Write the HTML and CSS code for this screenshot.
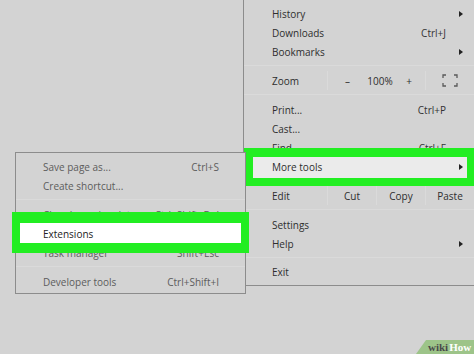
FILE: index.html
```html
<!DOCTYPE html>
<html>
<head>
<meta charset="utf-8">
<link rel="stylesheet" href="styles.css">
</head>
<body>
<div class="desktop">
  <div class="menu main">
    <div class="item"><span class="label">History</span><span class="arrow"></span></div>
    <div class="item"><span class="label">Downloads</span><span class="key">Ctrl+J</span></div>
    <div class="item"><span class="label">Bookmarks</span><span class="arrow"></span></div>
    <div class="sep"></div>
    <div class="item tools">
      <span class="label">Zoom</span>
      <div class="zoomgroup">
        <span class="zminus">–</span><span class="zval">100%</span><span class="zplus">+</span>
      </div>
      <div class="cell">
        <svg width="16" height="13" viewBox="0 0 16 13" class="fs">
          <path d="M1 4V1h3M12 1h3v3M15 9v3h-3M4 12H1V9" fill="none" stroke="#5a5a5a" stroke-width="1.3"/>
        </svg>
      </div>
    </div>
    <div class="sep"></div>
    <div class="item"><span class="label">Print...</span><span class="key">Ctrl+P</span></div>
    <div class="item"><span class="label">Cast...</span></div>
    <div class="item"><span class="label">Find...</span><span class="key">Ctrl+F</span></div>
    <div class="item hl-more"><span class="label">More tools</span><span class="arrow"></span></div>
    <div class="sep"></div>
    <div class="item tools">
      <span class="label">Edit</span>
      <div class="cell">Cut</div>
      <div class="cell">Copy</div>
      <div class="cell">Paste</div>
    </div>
    <div class="sep"></div>
    <div class="item"><span class="label">Settings</span></div>
    <div class="item"><span class="label">Help</span><span class="arrow"></span></div>
    <div class="sep last"></div>
    <div class="item"><span class="label">Exit</span></div>
  </div>

  <div class="menu sub">
    <div class="sitem"><span class="label">Save page as...</span><span class="key">Ctrl+S</span></div>
    <div class="sitem"><span class="label">Create shortcut...</span></div>
    <div class="sep"></div>
    <div class="sitem"><span class="label">Clear browsing data...</span><span class="key">Ctrl+Shift+Del</span></div>
    <div class="sitem hl-ext"><span class="label">Extensions</span></div>
    <div class="sitem"><span class="label">Task manager</span><span class="key">Shift+Esc</span></div>
    <div class="sep"></div>
    <div class="sitem"><span class="label">Developer tools</span><span class="key">Ctrl+Shift+I</span></div>
  </div>

  <div class="badge"><span class="wiki">wiki</span><span class="how">How</span></div>
</div>
</body>
</html>
```
FILE: styles.css
```css
html, body {
  margin: 0;
  padding: 0;
}
body {
  background: #d3d3d3;
  font-family: "Open Sans", "Noto Sans", sans-serif;
  font-size: 10px;
  color: #2e2e2e;
}
.desktop {
  position: relative;
  width: 474px;
  height: 354px;
  overflow: hidden;
}
.menu {
  background: #d3d3d3;
}
.main {
  margin-left: 243px;
  border-left: 1px solid #8c8c8c;
  border-bottom: 1px solid #8c8c8c;
  padding: 4px 0 4px;
}
.item {
  display: flex;
  align-items: center;
  height: 19px;
  padding: 0 28px 0 28px;
}
.item .label {
  flex: 1;
}
.item .key {
  color: #333;
}
.arrow {
  width: 0;
  height: 0;
  border-top: 3.5px solid transparent;
  border-bottom: 3.5px solid transparent;
  border-left: 4px solid #222;
  margin-right: -17px;
}
.sep {
  height: 10px;
  position: relative;
}
.sep::after {
  content: "";
  position: absolute;
  left: 0;
  right: 0;
  top: 4px;
  height: 1px;
  background: #dadada;
}
.sep.last {
  height: 9px;
}
.tools {
  padding-right: 0;
}
.zoomgroup {
  display: flex;
  width: 98px;
  height: 19px;
  align-items: center;
  border-left: 1px solid #dadada;
  box-sizing: border-box;
}
.zminus {
  width: 39px;
  text-align: center;
}
.zval {
  width: 26px;
  text-align: center;
}
.zplus {
  width: 32px;
  text-align: center;
}
.cell {
  width: 49px;
  height: 19px;
  box-sizing: border-box;
  border-left: 1px solid #dadada;
  display: flex;
  align-items: center;
  justify-content: center;
}
.fs {
  display: block;
}
.hl-more {
  position: relative;
  z-index: 2;
  margin: 0 7px 0 9px;
  padding-left: 19px;
  padding-right: 21px;
  background: #ebebeb;
  box-shadow: 0 2px 0 0 #ebebeb, -1px -1px 0 8px #22ee22, -1px 2px 0 8px #22ee22;
}

.sub {
  position: absolute;
  left: 15px;
  top: 152px;
  width: 231px;
  height: 142px;
  box-sizing: border-box;
  border: 1px solid #8c8c8c;
  padding-top: 4px;
  z-index: 3;
  color: #5c5c5c;
}
.sitem {
  display: flex;
  align-items: center;
  height: 19px;
  padding: 0 26px 0 27px;
}
.sitem .label {
  flex: 1;
}
.hl-ext {
  position: relative;
  z-index: 2;
  margin: 0 4px;
  padding-left: 23px;
  background: #ffffff;
  color: #222;
  box-shadow: 0 -1px 0 0 #ffffff, 0 -4px 0 8px #22ee22, 0 2px 0 8px #22ee22;
}

.badge {
  position: absolute;
  right: 0;
  bottom: 0;
  width: 58px;
  height: 14px;
  background: #9dc489;
  clip-path: polygon(10px 0, 100% 0, 100% 100%, 0 100%);
  font-family: "Liberation Serif", "DejaVu Serif", serif;
  font-weight: bold;
  font-size: 11px;
  line-height: 15px;
  padding-left: 12px;
  box-sizing: border-box;
  white-space: nowrap;
}
.wiki {
  color: #4a4a4a;
}
.how {
  color: #ffffff;
  margin-left: 1px;
}
```
